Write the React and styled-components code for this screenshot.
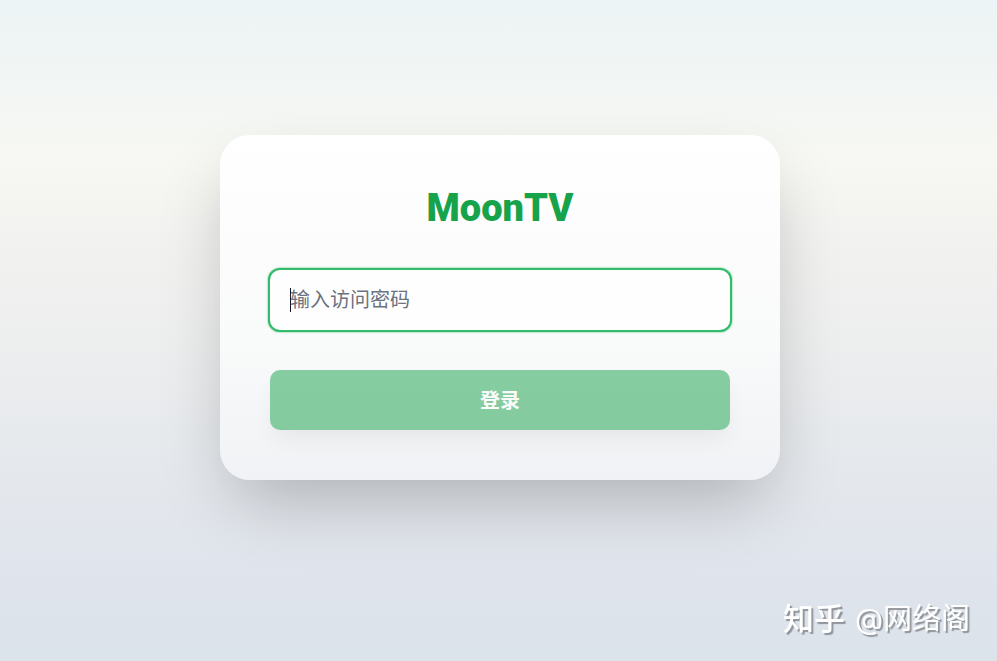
import { useState } from "react";
import styled, { createGlobalStyle } from "styled-components";

const App = () => {
  const [password, setPassword] = useState("");

  const handleSubmit = (e) => {
    e.preventDefault();
  };

  return (
    <Container>
      <GlobalStyle />
      <Card>
        <Title>MoonTV</Title>
        <Form onSubmit={handleSubmit}>
          <Field>
            <Input
              type="password"
              aria-label="输入访问密码"
              placeholder="输入访问密码"
              value={password}
              autoFocus
              onChange={(e) => setPassword(e.target.value)}
            />
            {!password && <Caret />}
          </Field>
          <Button type="submit" disabled={!password}>
            登录
          </Button>
        </Form>
      </Card>
      <Watermark>
        <Brand>知乎</Brand>
        <span>@网络阁</span>
      </Watermark>
    </Container>
  );
};

export default App;

const GlobalStyle = createGlobalStyle`
  * {
    box-sizing: border-box;
  }

  body {
    margin: 0;
    font-family: Inter, "Noto Sans CJK SC", sans-serif;
  }
`;

const Container = styled.main`
  min-height: 100vh;
  padding: 135px 16px 20px 19px;
  background: linear-gradient(
    180deg,
    #edf4f5 0%,
    #f0f5f4 9%,
    #f7f8f3 24%,
    #f2f2f0 36%,
    #ecedee 55%,
    #e5e9ed 70%,
    #e0e4ec 86%,
    #dbe3eb 100%
  );
`;

const Card = styled.section`
  width: 100%;
  max-width: 560px;
  margin: 0 auto;
  padding: 50px;
  border-radius: 30px;
  background: linear-gradient(180deg, #ffffff 0%, #fcfcfc 35%, #f9fafa 60%, #f0f2f5 100%);
  box-shadow: 0 31px 70px -14px rgba(0, 0, 0, 0.25);
`;

const Title = styled.h1`
  margin: 0 0 38px;
  color: #16a34a;
  font-family: Roboto, "Liberation Sans", sans-serif;
  font-size: 38px;
  font-weight: 900;
  line-height: 47px;
  text-align: center;
`;

const Form = styled.form`
  display: flex;
  flex-direction: column;
  gap: 40px;
`;

const Field = styled.div`
  position: relative;
`;

const Input = styled.input`
  display: block;
  width: 100%;
  height: 60px;
  padding: 0 20px;
  border: none;
  border-radius: 10px;
  outline: none;
  background: #fefefe;
  box-shadow: 0 0 0 2px #35bb6c, 0 0 2px 2px #35bb6c;
  color: #111827;
  caret-color: ${(props) => (props.value ? "#111827" : "transparent")};
  font-family: inherit;
  font-size: 20px;

  &::placeholder {
    color: #6b7280;
    opacity: 1;
  }
`;

const Caret = styled.span`
  position: absolute;
  top: 18px;
  left: 20px;
  width: 1px;
  height: 24px;
  background: #111827;
  pointer-events: none;
`;

const Button = styled.button`
  height: 60px;
  padding: 0 20px 2px;
  border: none;
  border-radius: 10px;
  background: #16a34a;
  box-shadow: 0 12px 18px -4px rgba(0, 0, 0, 0.1);
  color: white;
  font-family: inherit;
  font-size: 20px;
  font-weight: 700;
  cursor: pointer;

  &:disabled {
    opacity: 0.5;
    cursor: not-allowed;
  }
`;

const Watermark = styled.div`
  position: fixed;
  right: 27px;
  bottom: 20px;
  display: flex;
  gap: 10px;
  color: white;
  font-size: 29px;
  line-height: 44px;
  text-shadow: 2px 2px 1px rgba(0, 0, 0, 0.35);
`;

const Brand = styled.span`
  font-size: 31px;
  font-weight: 500;
`;
